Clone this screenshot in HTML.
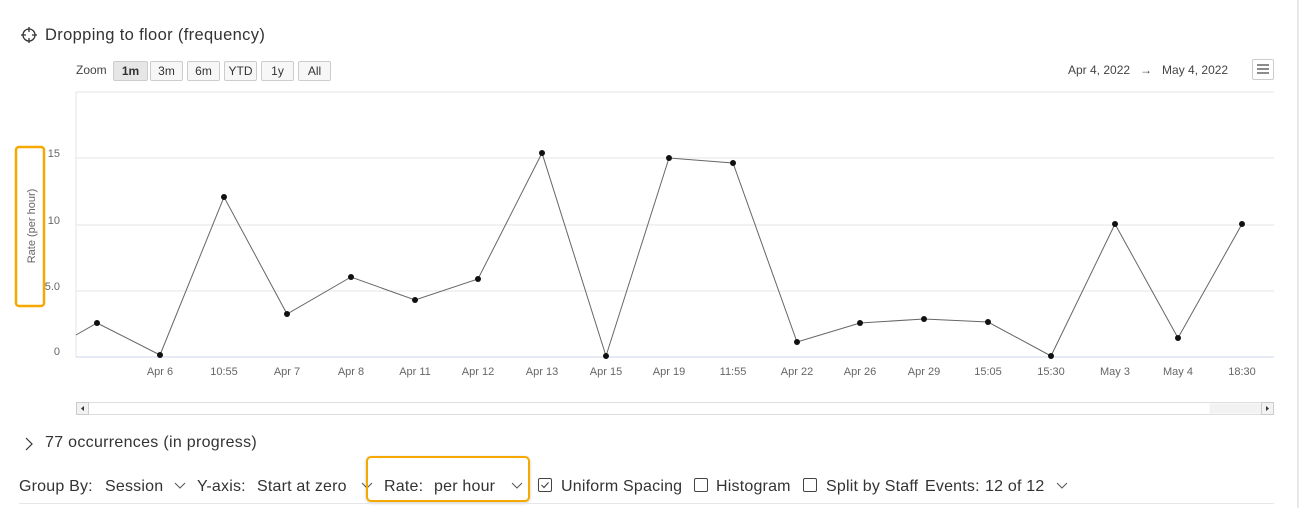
<!DOCTYPE html>
<html><head><style>
body{margin:0;width:1300px;height:508px;background:#fff;font-family:"Liberation Sans",sans-serif;position:relative;overflow:hidden;color:#333}
.a{position:absolute;white-space:nowrap}
.btn{position:absolute;top:61px;height:18px;border:1px solid #ccc;border-radius:2px;background:#f7f7f7;font-size:12px;line-height:18px;text-align:center;color:#333}
.ctl{position:absolute;top:478px;font-size:16px;color:#333;letter-spacing:0.2px}
</style></head><body>
<div style="position:absolute;left:1297px;top:0;width:2px;height:508px;background:#e8e8e8"></div>
<svg class="a" style="left:20px;top:26px" width="18" height="18" viewBox="0 0 18 18"><circle cx="9" cy="9" r="6" fill="none" stroke="#333" stroke-width="1.3"/><path d="M9 1v5M9 12v5M1 9h5M12 9h5" stroke="#333" stroke-width="1.3"/></svg>
<div class="a" style="left:45px;top:26px;font-size:16.5px;color:#333;letter-spacing:0.35px">Dropping to floor (frequency)</div>
<div class="a" style="left:76px;top:63px;font-size:12px;color:#444">Zoom</div>
<div class="btn" style="left:113px;width:33px;background:#e6e6e6;font-weight:bold">1m</div>
<div class="btn" style="left:150px;width:31px">3m</div>
<div class="btn" style="left:187px;width:31px">6m</div>
<div class="btn" style="left:224px;width:31px">YTD</div>
<div class="btn" style="left:261px;width:31px">1y</div>
<div class="btn" style="left:298px;width:31px">All</div>
<div class="a" style="left:1068px;top:63px;font-size:12px;color:#444">Apr 4, 2022 &nbsp;&nbsp;→&nbsp;&nbsp; May 4, 2022</div>
<div class="a" style="left:1252px;top:59px;width:20px;height:19px;border:1px solid #ccc;border-radius:2px"></div>
<svg class="a" style="left:1256px;top:63px" width="14" height="12"><path d="M1 2h12M1 6h12M1 10h12" stroke="#666" stroke-width="1.5"/></svg>
<svg class="a" style="left:0;top:0" width="1300" height="420">
<path d="M76 92H1274" stroke="#e6e6e6"/>
<path d="M76 92V357" stroke="#e6e6e6"/>
<path d="M76 158H1274M76 225H1274M76 291H1274" stroke="#e6e6e6"/>
<path d="M76 357H1274" stroke="#ccd6eb"/>
<g font-size="11" fill="#666" font-family="Liberation Sans"><text x="60" y="157" text-anchor="end">15</text><text x="60" y="224" text-anchor="end">10</text><text x="60" y="290" text-anchor="end">5.0</text><text x="60" y="355" text-anchor="end">0</text></g>
<text transform="translate(35,226) rotate(-90)" font-size="11" fill="#666" text-anchor="middle" font-family="Liberation Sans">Rate (per hour)</text>
<rect x="16" y="147" width="28" height="159" rx="3" fill="none" stroke="#f5a800" stroke-width="2.5"/>
<polyline fill="none" stroke="#666" stroke-width="1" points="76,335 97,323 160,355 224,197 287,314 351,277 415,300 478,279 542,153 606,356 669,158 733,163 797,342 860,323 924,319 988,322 1051,356 1115,224 1178,338 1242,224"/>
<g fill="#111"><circle cx="97" cy="323" r="3"/><circle cx="160" cy="355" r="3"/><circle cx="224" cy="197" r="3"/><circle cx="287" cy="314" r="3"/><circle cx="351" cy="277" r="3"/><circle cx="415" cy="300" r="3"/><circle cx="478" cy="279" r="3"/><circle cx="542" cy="153" r="3"/><circle cx="606" cy="356" r="3"/><circle cx="669" cy="158" r="3"/><circle cx="733" cy="163" r="3"/><circle cx="797" cy="342" r="3"/><circle cx="860" cy="323" r="3"/><circle cx="924" cy="319" r="3"/><circle cx="988" cy="322" r="3"/><circle cx="1051" cy="356" r="3"/><circle cx="1115" cy="224" r="3"/><circle cx="1178" cy="338" r="3"/><circle cx="1242" cy="224" r="3"/></g>
<g font-size="11" fill="#666" text-anchor="middle" font-family="Liberation Sans"><text x="160" y="375">Apr 6</text><text x="224" y="375">10:55</text><text x="287" y="375">Apr 7</text><text x="351" y="375">Apr 8</text><text x="415" y="375">Apr 11</text><text x="478" y="375">Apr 12</text><text x="542" y="375">Apr 13</text><text x="606" y="375">Apr 15</text><text x="669" y="375">Apr 19</text><text x="733" y="375">11:55</text><text x="797" y="375">Apr 22</text><text x="860" y="375">Apr 26</text><text x="924" y="375">Apr 29</text><text x="988" y="375">15:05</text><text x="1051" y="375">15:30</text><text x="1115" y="375">May 3</text><text x="1178" y="375">May 4</text><text x="1242" y="375">18:30</text></g>
<rect x="76.5" y="402.5" width="1197" height="12" fill="#fff" stroke="#ddd"/>
<rect x="76.5" y="402.5" width="12" height="12" fill="#f2f2f2" stroke="#ccc"/>
<rect x="1209.5" y="403.5" width="52" height="10" fill="#f2f2f2"/>
<rect x="1261.5" y="402.5" width="12" height="12" fill="#f2f2f2" stroke="#ccc"/>
<path d="M84 406v5l-3-2.5z M1266 406v5l3-2.5z" fill="#333"/>
</svg>
<svg class="a" style="left:24px;top:436px" width="10" height="16"><path d="M2 2l6 6-6 6" fill="none" stroke="#333" stroke-width="1.2"/></svg>
<div class="a" style="left:45px;top:434px;font-size:16px;color:#333;letter-spacing:0.3px">77 occurrences (in progress)</div>
<div class="ctl" style="left:19px">Group By:</div>
<div class="ctl" style="left:105px">Session</div>
<svg class="a" style="left:174px;top:482px" width="12" height="8"><path d="M1 1l5 5 5-5" fill="none" stroke="#555"/></svg>
<div class="ctl" style="left:197px">Y-axis:</div>
<div class="ctl" style="left:257px">Start at zero</div>
<svg class="a" style="left:361px;top:482px" width="12" height="8"><path d="M1 1l5 5 5-5" fill="none" stroke="#555"/></svg>
<div class="a" style="left:366px;top:456px;width:164px;height:46px;border:2.5px solid #f5a800;border-radius:5px;box-sizing:border-box;box-shadow:0 1px 3px rgba(0,0,0,.2)"></div>
<div class="ctl" style="left:384px">Rate:</div>
<div class="ctl" style="left:434px">per hour</div>
<svg class="a" style="left:511px;top:482px" width="12" height="8"><path d="M1 1l5 5 5-5" fill="none" stroke="#555"/></svg>
<svg class="a" style="left:538px;top:478px" width="15" height="15"><rect x="0.5" y="0.5" width="13" height="13" rx="1.5" fill="none" stroke="#444"/><path d="M3.5 7l2.5 2.5 4.5-5" fill="none" stroke="#444" stroke-width="1.2"/></svg>
<div class="ctl" style="left:561px">Uniform Spacing</div>
<svg class="a" style="left:694px;top:478px" width="15" height="15"><rect x="0.5" y="0.5" width="13" height="13" rx="1.5" fill="none" stroke="#444"/></svg>
<div class="ctl" style="left:716px">Histogram</div>
<svg class="a" style="left:803px;top:478px" width="15" height="15"><rect x="0.5" y="0.5" width="13" height="13" rx="1.5" fill="none" stroke="#444"/></svg>
<div class="ctl" style="left:826px">Split by Staff</div>
<div class="ctl" style="left:925px">Events:</div>
<div class="ctl" style="left:985px">12 of 12</div>
<svg class="a" style="left:1056px;top:482px" width="12" height="8"><path d="M1 1l5 5 5-5" fill="none" stroke="#555"/></svg>
<div class="a" style="left:19px;top:503px;width:1255px;height:1px;background:#e6e6e6"></div>
</body></html>
